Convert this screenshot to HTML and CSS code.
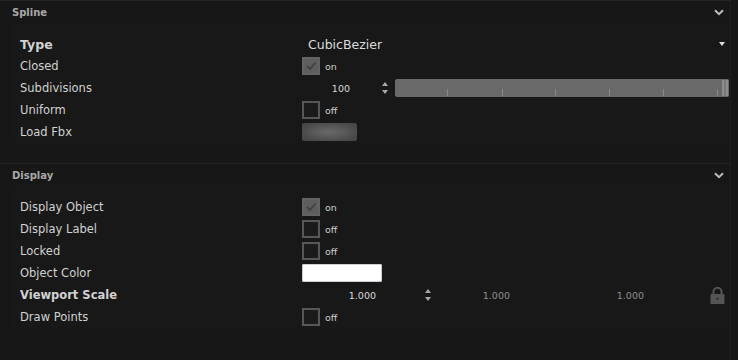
FILE: index.html
```html
<!DOCTYPE html>
<html>
<head>
<meta charset="utf-8">
<link rel="stylesheet" href="styles.css">
</head>
<body>
<div class="panel">
  <section class="section">
    <div class="sec-head">
      <span class="sec-title">Spline</span>
      <svg class="chev" width="10" height="7" viewBox="0 0 10 7"><path d="M1 1.2 L5 5.2 L9 1.2" fill="none" stroke="#bdbdbd" stroke-width="2"/></svg>
    </div>
    <div class="props">
      <div class="row">
        <div class="label bold big">Type</div>
        <div class="value dropdown">
          <span class="dd-text">CubicBezier</span>
          <svg class="dd-arrow" width="6" height="4" viewBox="0 0 6 4"><path d="M0 0 L6 0 L3 4 Z" fill="#dcdcdc"/></svg>
        </div>
      </div>
      <div class="row">
        <div class="label">Closed</div>
        <div class="value">
          <span class="cb on"><svg width="14" height="14" viewBox="0 0 14 14"><path d="M3 7 L6 10 L11.5 3.5" fill="none" stroke="#3e3e3e" stroke-width="1.6"/></svg></span>
          <span class="cb-text">on</span>
        </div>
      </div>
      <div class="row">
        <div class="label">Subdivisions</div>
        <div class="value">
          <div class="numfield sub">
            <span class="num">100</span>
            <span class="spin"><i class="up"></i><i class="down"></i></span>
          </div>
          <div class="slider">
            <i class="tick" style="left:52px"></i>
            <i class="tick" style="left:107px"></i>
            <i class="tick" style="left:160px"></i>
            <i class="tick" style="left:214px"></i>
            <i class="tick" style="left:268px"></i>
            <i class="tick" style="left:322px"></i>
            <i class="handle"></i>
          </div>
        </div>
      </div>
      <div class="row">
        <div class="label">Uniform</div>
        <div class="value">
          <span class="cb"></span>
          <span class="cb-text">off</span>
        </div>
      </div>
      <div class="row">
        <div class="label">Load Fbx</div>
        <div class="value">
          <span class="button"></span>
        </div>
      </div>
    </div>
  </section>
  <section class="section">
    <div class="sec-head">
      <span class="sec-title">Display</span>
      <svg class="chev" width="10" height="7" viewBox="0 0 10 7"><path d="M1 1.2 L5 5.2 L9 1.2" fill="none" stroke="#bdbdbd" stroke-width="2"/></svg>
    </div>
    <div class="props">
      <div class="row">
        <div class="label">Display Object</div>
        <div class="value">
          <span class="cb on"><svg width="14" height="14" viewBox="0 0 14 14"><path d="M3 7 L6 10 L11.5 3.5" fill="none" stroke="#3e3e3e" stroke-width="1.6"/></svg></span>
          <span class="cb-text">on</span>
        </div>
      </div>
      <div class="row">
        <div class="label">Display Label</div>
        <div class="value"><span class="cb"></span><span class="cb-text">off</span></div>
      </div>
      <div class="row">
        <div class="label">Locked</div>
        <div class="value"><span class="cb"></span><span class="cb-text">off</span></div>
      </div>
      <div class="row">
        <div class="label">Object Color</div>
        <div class="value"><span class="swatch"></span></div>
      </div>
      <div class="row">
        <div class="label bold">Viewport Scale</div>
        <div class="value">
          <div class="numfield vec">
            <span class="num">1.000</span>
            <span class="spin"><i class="up"></i><i class="down"></i></span>
          </div>
          <div class="numfield vec dim"><span class="num">1.000</span></div>
          <div class="numfield vec dim"><span class="num">1.000</span></div>
          <svg class="lock" width="15" height="17" viewBox="0 0 15 17">
            <path d="M3.5 7 V4.8 A4 4 0 0 1 11.5 4.8 V7" fill="none" stroke="#555" stroke-width="2"/>
            <rect x="0.5" y="7" width="14" height="10" rx="1" fill="#555"/>
            <circle cx="7.5" cy="11.8" r="1.2" fill="#2e2e2e"/>
          </svg>
        </div>
      </div>
      <div class="row">
        <div class="label">Draw Points</div>
        <div class="value"><span class="cb"></span><span class="cb-text">off</span></div>
      </div>
    </div>
  </section>
</div>
</body>
</html>
```

FILE: styles.css
```css
html, body {
  margin: 0;
  padding: 0;
  background: #151515;
}
body {
  width: 738px;
  height: 360px;
  overflow: hidden;
  font-family: "DejaVu Sans", Verdana, sans-serif;
  color: #d6d6d6;
}
.panel {
  width: 731px;
  height: 360px;
  background: #171717;
  border-right: 1px solid #1d1d1d;
  border-top: 1px solid #262626;
  box-sizing: border-box;
}
.section {
  padding-bottom: 20px;
}
.section + .section {
  border-top: 1px solid #262626;
}
.sec-head {
  height: 22px;
  display: flex;
  align-items: center;
  justify-content: space-between;
  padding: 0 6px 0 12px;
}
.sec-title {
  font-size: 10px;
  font-weight: bold;
  color: #a8a8a8;
}
.chev {
  display: block;
}
.props {
  margin-left: 12px;
  padding-top: 10px;
  background: #181818;
}
.row {
  height: 22px;
  display: flex;
  align-items: center;
}
.label {
  width: 282px;
  padding-left: 8px;
  font-size: 11.5px;
  color: #d2d2d2;
  white-space: nowrap;
}
.label.bold {
  font-weight: bold;
}
.label.big {
  font-size: 12.5px;
}
.value {
  flex: 1;
  display: flex;
  align-items: center;
  height: 22px;
}
.dropdown {
  justify-content: space-between;
  padding-right: 5px;
}
.dd-text {
  padding-left: 6px;
  font-size: 12.5px;
  color: #dcdcdc;
}
.dd-arrow {
  display: block;
}
.cb {
  width: 18px;
  height: 18px;
  box-sizing: border-box;
  border: 2px solid #575757;
  background: #1b1b1b;
  display: flex;
  align-items: center;
  justify-content: center;
}
.cb.on {
  background: #5e5e5e;
  border-color: #636363;
}
.cb svg {
  display: block;
}
.cb-text {
  margin-left: 5px;
  font-size: 9.5px;
  color: #cfcfcf;
}
.numfield {
  position: relative;
  height: 18px;
  display: flex;
  align-items: center;
  justify-content: flex-end;
  box-sizing: border-box;
}
.numfield.sub {
  width: 93px;
  padding-right: 45px;
}
.numfield.vec {
  width: 134px;
  padding-right: 60px;
}
.num {
  font-size: 9.5px;
  color: #d8d8d8;
}
.dim .num {
  color: #8e8e8e;
}
.spin {
  position: absolute;
  top: 2px;
  width: 7px;
  height: 14px;
}
.sub .spin {
  right: 6px;
}
.vec .spin {
  right: 4px;
}
.spin i {
  position: absolute;
  left: 0;
  width: 0;
  height: 0;
  border-left: 3.5px solid transparent;
  border-right: 3.5px solid transparent;
}
.spin .up {
  top: 1px;
  border-bottom: 4px solid #a8a8a8;
}
.spin .down {
  bottom: 1px;
  border-top: 4px solid #a8a8a8;
}
.slider {
  position: relative;
  width: 334px;
  height: 18px;
  background: #6a6a6a;
  border-radius: 2px;
}
.tick {
  position: absolute;
  bottom: 1px;
  width: 1px;
  height: 7px;
  background: #8a8a8a;
}
.handle {
  position: absolute;
  right: 1px;
  top: 1px;
  width: 6px;
  height: 16px;
  border-left: 2px solid #8c8c8c;
  border-right: 2px solid #8c8c8c;
  box-sizing: border-box;
  background: #7a7a7a;
}
.button {
  width: 55px;
  height: 18px;
  border-radius: 2px;
  background: radial-gradient(ellipse at center, #6a6a6a 0%, #4c4c4c 70%, #444 100%);
}
.swatch {
  width: 80px;
  height: 18px;
  box-sizing: border-box;
  background: #ffffff;
  border: 1px solid #cfcfcf;
  border-radius: 1px;
}
.lock {
  display: block;
  margin-left: 6px;
}
```
